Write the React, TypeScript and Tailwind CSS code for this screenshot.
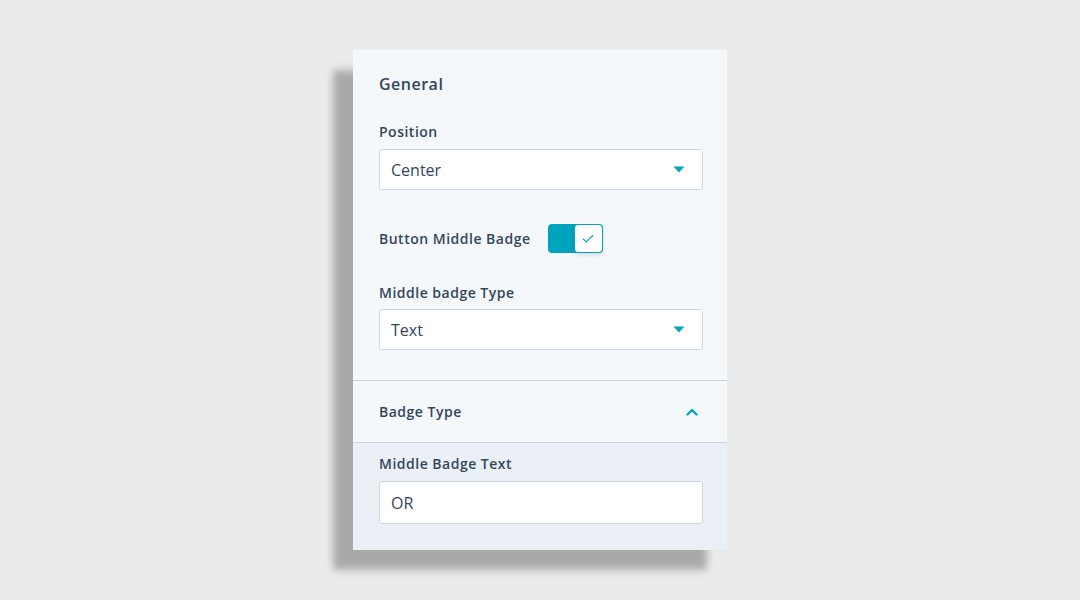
import { Check } from "lucide-react";

function Caret() {
  return (
    <svg width="12" height="7" viewBox="0 0 12 7" className="shrink-0">
      <path d="M0.5 0.5h11L6 6.5z" fill="#00a4bd" />
    </svg>
  );
}

function SelectBox({ value }: { value: string }) {
  return (
    <div className="flex h-[41px] items-center justify-between rounded-[3px] border border-[#cbd6e2] bg-white pl-[11px] pr-[17px]">
      <span className="text-base text-[#33475b]">{value}</span>
      <Caret />
    </div>
  );
}

function Label({ children }: { children: React.ReactNode }) {
  return (
    <div className="text-sm font-semibold leading-5 tracking-[0.5px] text-[#33475b]">{children}</div>
  );
}

export default function App() {
  return (
    <div
      className="flex h-[600px] w-[1080px] items-start justify-center bg-[#ebebeb] pt-[50px]"
      style={{ fontFamily: "'Open Sans', 'Noto Sans', sans-serif" }}
    >
      <div className="w-[374px] bg-[#f5f8fa] shadow-[-20px_20px_8px_rgba(0,0,0,0.28)]">
        {/* General */}
        <div className="border-b border-[#cbd6e2] pb-[30px] pl-[26px] pr-[24px] pt-[22px]">
          <h2 className="text-base font-semibold leading-6 tracking-[0.5px] text-[#33475b]">General</h2>

          <div className="mt-[26px]">
            <Label>Position</Label>
            <div className="mt-[7px]">
              <SelectBox value="Center" />
            </div>
          </div>

          <div className="mt-[34px] flex items-center gap-[17px]">
            <Label>Button Middle Badge</Label>
            <div className="flex h-[29px] w-[55px] items-center rounded-[4px] bg-[#00a4bd]">
              <div className="ml-auto flex h-[29px] w-[29px] items-center justify-center rounded-[4px] border border-[#00a4bd] bg-white shadow-[0_2px_4px_rgba(0,0,0,0.12)]">
                <Check size={14} strokeWidth={2} color="#00a4bd" />
              </div>
            </div>
          </div>

          <div className="mt-[30px]">
            <Label>Middle badge Type</Label>
            <div className="mt-[6px]">
              <SelectBox value="Text" />
            </div>
          </div>
        </div>

        {/* Badge Type accordion */}
        <div className="flex h-[62px] items-center justify-between border-b border-[#cbd6e2] pl-[26px] pr-[29px]">
          <Label>Badge Type</Label>
          <svg width="12" height="8" viewBox="0 0 12 8">
            <path d="M1.5 6.5L6 2l4.5 4.5" fill="none" stroke="#00a4bd" strokeWidth="2.4" strokeLinecap="round" strokeLinejoin="round" />
          </svg>
        </div>

        <div className="bg-[#eaf0f6] pb-[26px] pl-[26px] pr-[24px] pt-[11px]">
          <Label>Middle Badge Text</Label>
          <div className="mt-[7px] flex h-[43px] items-center rounded-[3px] border border-[#cbd6e2] bg-white pl-[11px]">
            <span className="text-base text-[#33475b]">OR</span>
          </div>
        </div>
      </div>
    </div>
  );
}
